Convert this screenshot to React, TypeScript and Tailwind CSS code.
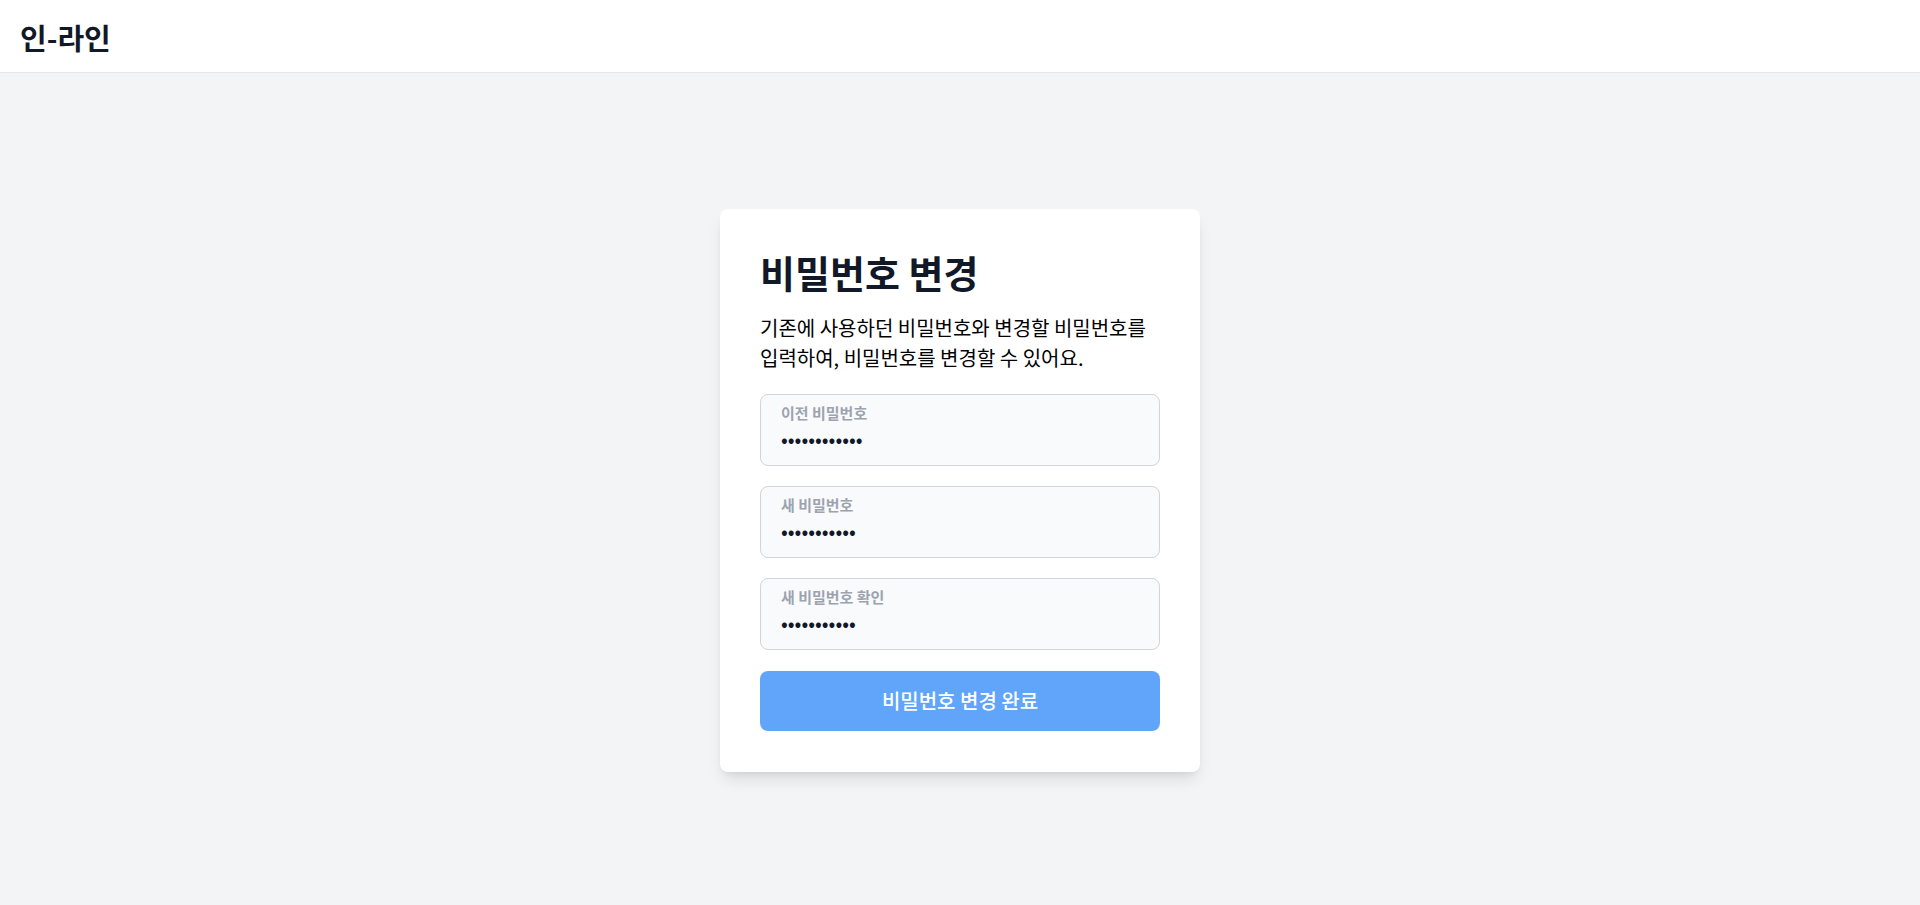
const FONT = "font-['Noto_Sans_CJK_KR',sans-serif]";

function PasswordField({ label, value }: { label: string; value: string }) {
  return (
    <label className="flex h-[72px] flex-col rounded-lg border border-[#d1d5db] bg-[#f9fafb] px-5 pt-2">
      <span className="text-[15px] font-semibold leading-5 text-[#9ca3af]">{label}</span>
      <input
        type="password"
        defaultValue={value}
        readOnly
        className={`${FONT} mt-1 w-full bg-transparent text-xl leading-6 text-[#111827] outline-none`}
      />
    </label>
  );
}

export default function App() {
  return (
    <div className={`${FONT} flex min-h-screen flex-col bg-[#f3f4f6] text-[#111827]`}>
      {/* header */}
      <header className="flex h-[73px] items-center border-b border-[#e5e7eb] bg-white px-5 pt-[2px]">
        <h1 className="text-[29px] font-bold leading-none">인-라인</h1>
      </header>

      <main className="flex flex-1 justify-center pt-[136px]">
        <div className="flex h-fit w-[480px] flex-col rounded-lg bg-white px-10 pt-[41px] pb-[41px] shadow-lg">
          <h2 className="text-[38px] font-bold leading-[44px]">비밀번호 변경</h2>
          <p className="mt-[19px] break-keep text-xl leading-[30px] text-black">
            기존에 사용하던 비밀번호와 변경할 비밀번호를 입력하여, 비밀번호를 변경할 수 있어요.
          </p>

          <div className="mt-[21px] flex flex-col gap-5">
            <PasswordField label="이전 비밀번호" value="oldpassword1" />
            <PasswordField label="새 비밀번호" value="newpassword" />
            <PasswordField label="새 비밀번호 확인" value="newpassword" />
            <button className="mt-px h-[60px] rounded-lg bg-[#60a5fa] text-xl font-medium text-white">
              비밀번호 변경 완료
            </button>
          </div>
        </div>
      </main>
    </div>
  );
}
